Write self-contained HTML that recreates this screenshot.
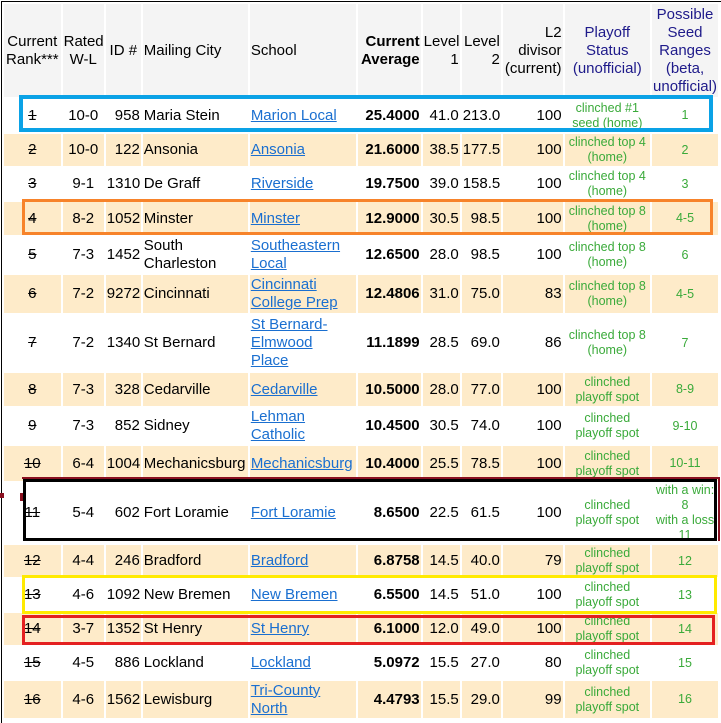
<!DOCTYPE html>
<html><head><meta charset="utf-8"><style>
html,body{margin:0;padding:0;background:#fff;width:721px;height:723px;overflow:hidden;position:relative}
body{font-family:"Liberation Sans",Arial,sans-serif;font-size:15px;color:#000}
.frame{position:absolute;left:1px;top:1px;width:730px;height:730px;border-left:1px solid #000;border-top:1px solid #000}
table{position:absolute;left:2px;top:2px;border-collapse:separate;border-spacing:2px;table-layout:fixed;width:718px}
td,th{padding:0 1px;white-space:nowrap;line-height:18px;overflow:hidden}
th{background:#f4f4f4;font-weight:normal;height:93px;vertical-align:middle;white-space:normal}
tr.c td{background:#feebc9}
td{text-align:right;vertical-align:middle}
td.l{text-align:left}
td.w{text-align:center}
td.s{text-align:left;white-space:normal}
td.s a{color:#1a6fd0;text-decoration:underline}
td.r{text-align:center;text-decoration:line-through}
td.b{font-weight:bold}
td.p,td.q{text-align:center;color:#3aaa3a;font-size:12.5px;line-height:15px}
th.p{color:#1e1a8a}
.box{position:absolute;box-sizing:border-box}
</style></head><body>
<div class="frame"></div>
<table>
<colgroup><col style="width:55px"><col style="width:40px"><col style="width:34px"><col style="width:102px"><col style="width:103px"><col style="width:61px"><col style="width:36px"><col style="width:38px"><col style="width:58px"><col style="width:83px"><col style="width:64px"></colgroup>
<tr><th style="text-align:center">Current Rank***</th><th>Rated W-L</th><th>ID #</th><th style="text-align:left">Mailing City</th><th style="text-align:left">School</th><th style="text-align:right;font-weight:bold">Current Average</th><th style="text-align:right">Level 1</th><th style="text-align:right">Level 2</th><th style="text-align:right">L2 divisor (current)</th><th class="p">Playoff Status (unofficial)</th><th class="p">Possible Seed Ranges (beta, unofficial)</th></tr>
<tr style="height:33px"><td class="r">1</td><td class="w">10-0</td><td>958</td><td class="l">Maria Stein</td><td class="s"><a>Marion Local</a></td><td class="b">25.4000</td><td>41.0</td><td>213.0</td><td>100</td><td class="p">clinched #1<br>seed (home)</td><td class="q">1</td></tr>
<tr class="c" style="height:32px"><td class="r">2</td><td class="w">10-0</td><td>122</td><td class="l">Ansonia</td><td class="s"><a>Ansonia</a></td><td class="b">21.6000</td><td>38.5</td><td>177.5</td><td>100</td><td class="p">clinched top 4<br>(home)</td><td class="q">2</td></tr>
<tr style="height:32px"><td class="r">3</td><td class="w">9-1</td><td>1310</td><td class="l">De Graff</td><td class="s"><a>Riverside</a></td><td class="b">19.7500</td><td>39.0</td><td>158.5</td><td>100</td><td class="p">clinched top 4<br>(home)</td><td class="q">3</td></tr>
<tr class="c" style="height:33px"><td class="r">4</td><td class="w">8-2</td><td>1052</td><td class="l">Minster</td><td class="s"><a>Minster</a></td><td class="b">12.9000</td><td>30.5</td><td>98.5</td><td>100</td><td class="p">clinched top 8<br>(home)</td><td class="q">4-5</td></tr>
<tr style="height:36px"><td class="r">5</td><td class="w">7-3</td><td>1452</td><td class="l">South<br>Charleston</td><td class="s"><a>Southeastern Local</a></td><td class="b">12.6500</td><td>28.0</td><td>98.5</td><td>100</td><td class="p">clinched top 8<br>(home)</td><td class="q">6</td></tr>
<tr class="c" style="height:38px"><td class="r">6</td><td class="w">7-2</td><td>9272</td><td class="l">Cincinnati</td><td class="s"><a>Cincinnati College Prep</a></td><td class="b">12.4806</td><td>31.0</td><td>75.0</td><td>83</td><td class="p">clinched top 8<br>(home)</td><td class="q">4-5</td></tr>
<tr style="height:56px"><td class="r">7</td><td class="w">7-2</td><td>1340</td><td class="l">St Bernard</td><td class="s"><a>St Bernard-<br>Elmwood<br>Place</a></td><td class="b">11.1899</td><td>28.5</td><td>69.0</td><td>86</td><td class="p">clinched top 8<br>(home)</td><td class="q">7</td></tr>
<tr class="c" style="height:33px"><td class="r">8</td><td class="w">7-3</td><td>328</td><td class="l">Cedarville</td><td class="s"><a>Cedarville</a></td><td class="b">10.5000</td><td>28.0</td><td>77.0</td><td>100</td><td class="p">clinched<br>playoff spot</td><td class="q">8-9</td></tr>
<tr style="height:35px"><td class="r">9</td><td class="w">7-3</td><td>852</td><td class="l">Sidney</td><td class="s"><a>Lehman Catholic</a></td><td class="b">10.4500</td><td>30.5</td><td>74.0</td><td>100</td><td class="p">clinched<br>playoff spot</td><td class="q">9-10</td></tr>
<tr class="c" style="height:35px"><td class="r">10</td><td class="w">6-4</td><td>1004</td><td class="l">Mechanicsburg</td><td class="s"><a>Mechanicsburg</a></td><td class="b">10.4000</td><td>25.5</td><td>78.5</td><td>100</td><td class="p">clinched<br>playoff spot</td><td class="q">10-11</td></tr>
<tr style="height:60px"><td class="r">11</td><td class="w">5-4</td><td>602</td><td class="l">Fort Loramie</td><td class="s"><a>Fort Loramie</a></td><td class="b">8.6500</td><td>22.5</td><td>61.5</td><td>100</td><td class="p">clinched<br>playoff spot</td><td class="q">with a win:<br>8<br>with a loss<br>11</td></tr>
<tr class="c" style="height:32px"><td class="r">12</td><td class="w">4-4</td><td>246</td><td class="l">Bradford</td><td class="s"><a>Bradford</a></td><td class="b">6.8758</td><td>14.5</td><td>40.0</td><td>79</td><td class="p">clinched<br>playoff spot</td><td class="q">12</td></tr>
<tr style="height:32px"><td class="r">13</td><td class="w">4-6</td><td>1092</td><td class="l">New Bremen</td><td class="s"><a>New Bremen</a></td><td class="b">6.5500</td><td>14.5</td><td>51.0</td><td>100</td><td class="p">clinched<br>playoff spot</td><td class="q">13</td></tr>
<tr class="c" style="height:32px"><td class="r">14</td><td class="w">3-7</td><td>1352</td><td class="l">St Henry</td><td class="s"><a>St Henry</a></td><td class="b">6.1000</td><td>12.0</td><td>49.0</td><td>100</td><td class="p">clinched<br>playoff spot</td><td class="q">14</td></tr>
<tr style="height:32px"><td class="r">15</td><td class="w">4-5</td><td>886</td><td class="l">Lockland</td><td class="s"><a>Lockland</a></td><td class="b">5.0972</td><td>15.5</td><td>27.0</td><td>80</td><td class="p">clinched<br>playoff spot</td><td class="q">15</td></tr>
<tr class="c" style="height:37px"><td class="r">16</td><td class="w">4-6</td><td>1562</td><td class="l">Lewisburg</td><td class="s"><a>Tri-County North</a></td><td class="b">4.4793</td><td>15.5</td><td>29.0</td><td>99</td><td class="p">clinched<br>playoff spot</td><td class="q">16</td></tr>
</table>
<div class="box" style="left:19px;top:95px;width:694px;height:37px;border:4px solid #0aa2e6"></div>
<div class="box" style="left:22px;top:199px;width:691px;height:36px;border:3px solid #f7832a"></div>
<div class="box" style="left:22px;top:477px;width:698px;height:64px;border:2px solid #8a1020;border-bottom:none;border-left:none"></div>
<div class="box" style="left:0px;top:493px;width:4px;height:5px;background:#8a1020"></div>
<div class="box" style="left:20px;top:493px;width:3px;height:8px;background:#8a1020"></div>
<div class="box" style="left:23px;top:479px;width:694px;height:62px;border:3px solid #000"></div>
<div class="box" style="left:22px;top:575px;width:695px;height:39px;border:3px solid #ffea00"></div>
<div class="box" style="left:22px;top:615px;width:693px;height:30px;border:3px solid #e42020"></div>
</body></html>
